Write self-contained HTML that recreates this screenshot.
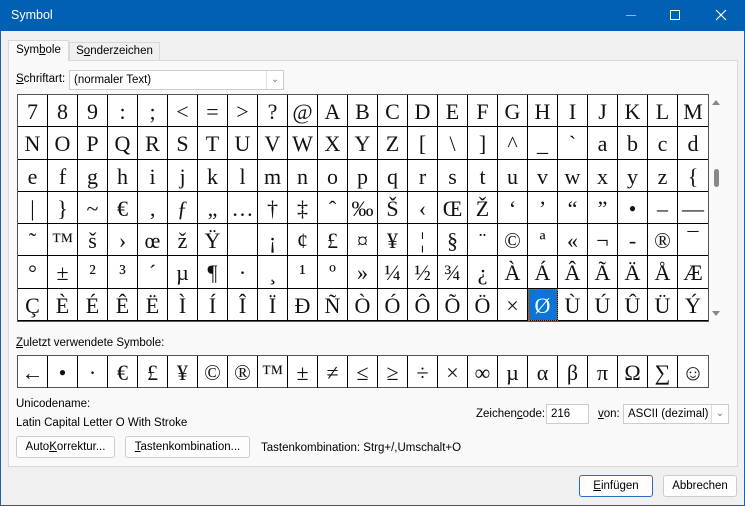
<!DOCTYPE html>
<html><head><meta charset="utf-8"><style>
*{box-sizing:border-box;margin:0;padding:0}
body{width:745px;height:506px;background:#f0f0f0;font-family:"Liberation Sans",sans-serif;font-size:11.5px;color:#000;position:relative;overflow:hidden}
.abs{position:absolute}
#title{left:0;top:0;width:745px;height:31px;background:#0160b4;color:#fff;font-size:12.5px}
#win{left:0;top:31px;width:745px;height:475px;border:1px solid #1a62b0;border-top:none}
#panel{left:8px;top:60px;width:730px;height:407px;background:#f9f9f9;border:1px solid #d9d9d9}
.tab{height:21px;border:1px solid #d9d9d9;border-bottom:none;font-size:11.5px;padding-top:3px;text-align:center}
.grid{display:grid;grid-template-columns:repeat(23,30px);border:1px solid #555;background:#fff}
.grid div{border-right:1px solid #000;border-bottom:1px solid #000;height:32.3px;font-family:"Liberation Serif","DejaVu Serif",serif;font-size:22px;text-align:center;line-height:34px;color:#111}
.grid div:nth-child(23n){border-right:none}
.sel{background:#0a74d8;color:#fff!important;outline:1px dotted #c60;outline-offset:-1px}
.btn{height:22px;border:1px solid #ccc;border-radius:3px;background:#fdfdfd;text-align:center;line-height:20px;font-size:11.5px}
.inp{background:#fff;border:1px solid #ccc;height:20px;line-height:18px;padding-left:4px;font-size:11.5px}
u{text-decoration:underline}
</style></head><body>
<div id="title" class="abs"><span class="abs" style="left:11px;top:8px">Symbol</span>
<div class="abs" style="left:626px;top:15px;width:10px;height:1px;background:#8fb8e0"></div>
<div class="abs" style="left:670px;top:10px;width:10px;height:10px;border:1px solid #fff"></div>
<svg class="abs" style="left:715px;top:9px" width="12" height="12"><path d="M1 1L11 11M11 1L1 11" stroke="#fff" stroke-width="1.2"/></svg>
</div>
<div id="win" class="abs"></div>
<div id="panel" class="abs"></div>
<div class="abs tab" style="left:8px;top:40px;width:61px;background:#f9f9f9;height:21px">Sym<u>b</u>ole</div>
<div class="abs tab" style="left:69px;top:42px;width:91px;height:18px;padding-top:2px;background:#f0f0f0">S<u>o</u>nderzeichen</div>
<div class="abs" style="left:16px;top:73px"><u>S</u>chriftart:</div>
<div class="abs inp" style="left:69px;top:70px;width:215px">(normaler Text)</div>
<div class="abs" style="left:266px;top:71px;width:17px;height:18px;border-left:1px solid #ddd;color:#777;font-size:10px;text-align:center;line-height:18px">&#8964;</div>

<div class="abs grid" style="left:17px;top:94px;width:692px;height:228px">
<div>7</div><div>8</div><div>9</div><div>:</div><div>;</div><div>&lt;</div><div>=</div><div>&gt;</div><div>?</div><div>@</div><div>A</div><div>B</div><div>C</div><div>D</div><div>E</div><div>F</div><div>G</div><div>H</div><div>I</div><div>J</div><div>K</div><div>L</div><div>M</div>
<div>N</div><div>O</div><div>P</div><div>Q</div><div>R</div><div>S</div><div>T</div><div>U</div><div>V</div><div>W</div><div>X</div><div>Y</div><div>Z</div><div>[</div><div>\</div><div>]</div><div>^</div><div>_</div><div>`</div><div>a</div><div>b</div><div>c</div><div>d</div>
<div>e</div><div>f</div><div>g</div><div>h</div><div>i</div><div>j</div><div>k</div><div>l</div><div>m</div><div>n</div><div>o</div><div>p</div><div>q</div><div>r</div><div>s</div><div>t</div><div>u</div><div>v</div><div>w</div><div>x</div><div>y</div><div>z</div><div>{</div>
<div>|</div><div>}</div><div>~</div><div>€</div><div>‚</div><div>ƒ</div><div>„</div><div>…</div><div>†</div><div>‡</div><div>ˆ</div><div>‰</div><div>Š</div><div>‹</div><div>Œ</div><div>Ž</div><div>‘</div><div>’</div><div>“</div><div>”</div><div>•</div><div>–</div><div>—</div>
<div>˜</div><div>™</div><div>š</div><div>›</div><div>œ</div><div>ž</div><div>Ÿ</div><div>&nbsp;</div><div>¡</div><div>¢</div><div>£</div><div>¤</div><div>¥</div><div>¦</div><div>§</div><div>¨</div><div>©</div><div>ª</div><div>«</div><div>¬</div><div>-</div><div>®</div><div>¯</div>
<div>°</div><div>±</div><div>²</div><div>³</div><div>´</div><div>µ</div><div>¶</div><div>·</div><div>¸</div><div>¹</div><div>º</div><div>»</div><div>¼</div><div>½</div><div>¾</div><div>¿</div><div>À</div><div>Á</div><div>Â</div><div>Ã</div><div>Ä</div><div>Å</div><div>Æ</div>
<div>Ç</div><div>È</div><div>É</div><div>Ê</div><div>Ë</div><div>Ì</div><div>Í</div><div>Î</div><div>Ï</div><div>Ð</div><div>Ñ</div><div>Ò</div><div>Ó</div><div>Ô</div><div>Õ</div><div>Ö</div><div>×</div><div class="sel">Ø</div><div>Ù</div><div>Ú</div><div>Û</div><div>Ü</div><div>Ý</div>
</div>
<div class="abs" style="left:709px;top:95px;width:14px;height:227px;background:#f9f9f9"></div>
<div class="abs" style="left:712px;top:100px;width:0;height:0;border-left:4px solid transparent;border-right:4px solid transparent;border-bottom:5px solid #888"></div>
<div class="abs" style="left:714px;top:169px;width:5px;height:18px;border-radius:3px;background:#888"></div>
<div class="abs" style="left:712px;top:311px;width:0;height:0;border-left:4px solid transparent;border-right:4px solid transparent;border-top:5px solid #888"></div>

<div class="abs" style="left:16px;top:337px"><u>Z</u>uletzt verwendete Symbole:</div>
<div class="abs grid" style="left:17px;top:355px;width:692px;height:33px">
<div style="border-bottom:none">←</div><div style="border-bottom:none">•</div><div style="border-bottom:none">·</div><div style="border-bottom:none">€</div><div style="border-bottom:none">£</div><div style="border-bottom:none">¥</div><div style="border-bottom:none">©</div><div style="border-bottom:none">®</div><div style="border-bottom:none">™</div><div style="border-bottom:none">±</div><div style="border-bottom:none">≠</div><div style="border-bottom:none">≤</div><div style="border-bottom:none">≥</div><div style="border-bottom:none">÷</div><div style="border-bottom:none">×</div><div style="border-bottom:none">∞</div><div style="border-bottom:none">µ</div><div style="border-bottom:none">α</div><div style="border-bottom:none">β</div><div style="border-bottom:none">π</div><div style="border-bottom:none">Ω</div><div style="border-bottom:none">∑</div><div style="border-bottom:none">☺</div>
</div>
<div class="abs" style="left:16px;top:398px">Unicodename:</div>
<div class="abs" style="left:16px;top:417px">Latin Capital Letter O With Stroke</div>
<div class="abs btn" style="left:16px;top:436px;width:99px">Auto<u>K</u>orrektur...</div>
<div class="abs btn" style="left:125px;top:436px;width:125px"><u>T</u>astenkombination...</div>
<div class="abs" style="left:261px;top:442px">Tastenkombination: Strg+/,Umschalt+O</div>
<div class="abs" style="left:476px;top:408px">Zeichen<u>c</u>ode:</div>
<div class="abs inp" style="left:546px;top:404px;width:43px">216</div>
<div class="abs" style="left:598px;top:408px"><u>v</u>on:</div>
<div class="abs inp" style="left:623px;top:404px;width:106px">ASCII (dezimal)</div>
<div class="abs" style="left:711px;top:405px;width:17px;height:18px;border-left:1px solid #ddd;color:#777;font-size:10px;text-align:center;line-height:18px">&#8964;</div>
<div class="abs btn" style="left:579px;top:475px;width:74px;border:1px solid #2a6fc4"><u>E</u>infügen</div>
<div class="abs btn" style="left:663px;top:475px;width:74px">Abbrechen</div>
</body></html>
